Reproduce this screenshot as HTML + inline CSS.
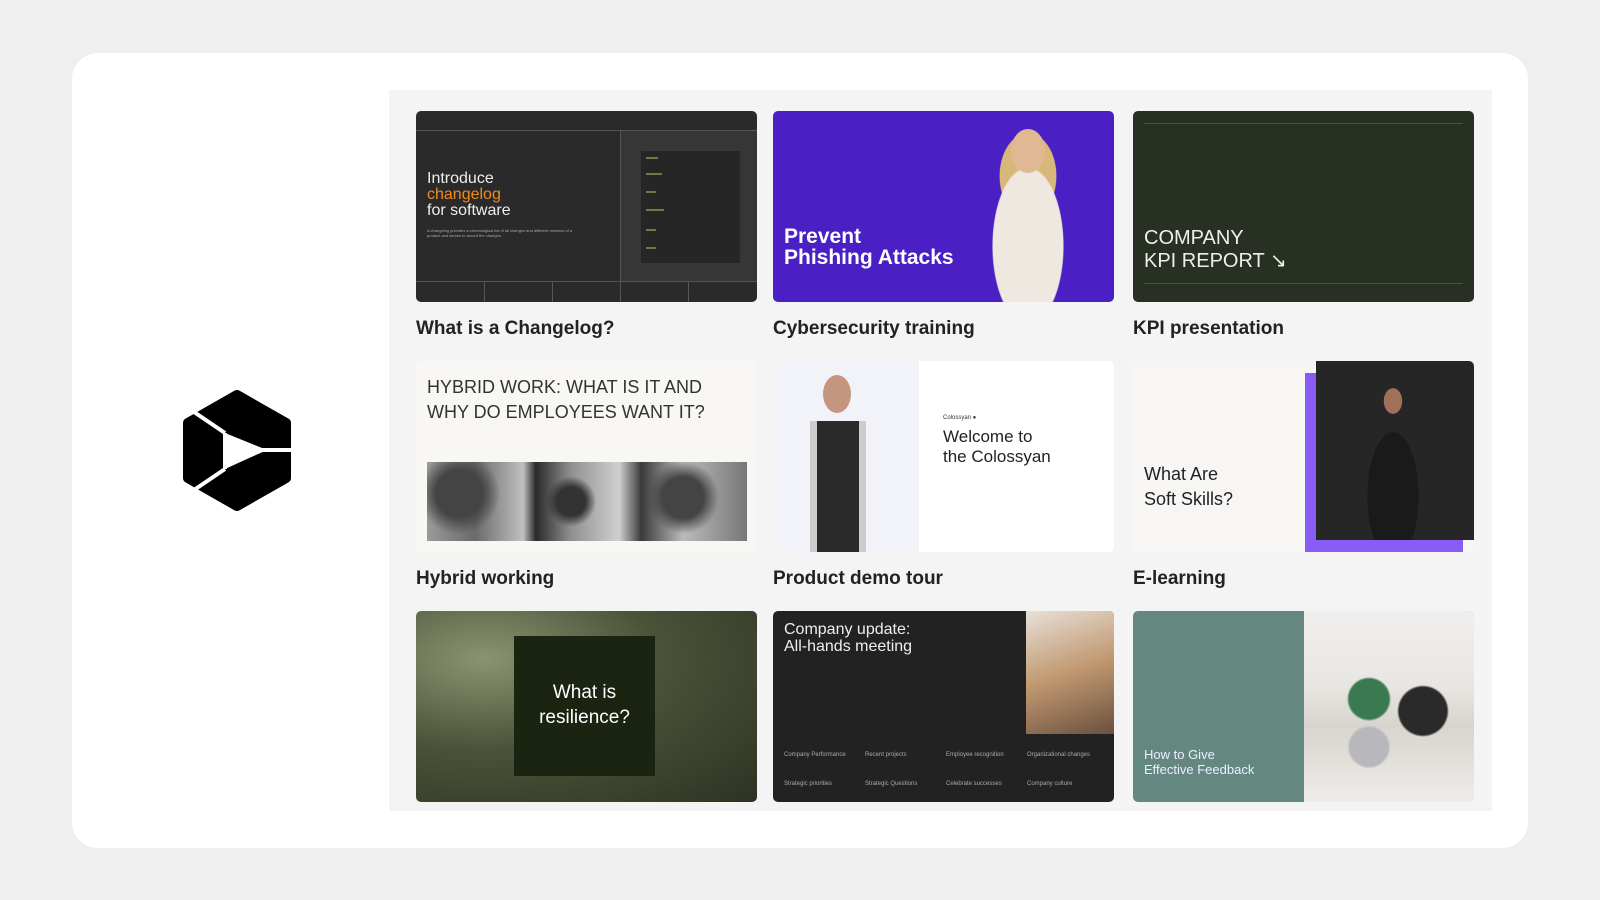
<!DOCTYPE html>
<html><head><meta charset="utf-8"><style>
*{margin:0;padding:0;box-sizing:border-box}
body{width:1600px;height:900px;background:#efefef;font-family:"Liberation Sans",sans-serif;position:relative;overflow:hidden}
.card{position:absolute;left:72px;top:53px;width:1456px;height:795px;background:#fff;border-radius:26px}
.panel{position:absolute;left:389px;top:90px;width:1103px;height:721px;background:#f4f4f4}
.t{position:absolute;width:341px;height:191px;border-radius:5px;overflow:hidden}
.lbl{position:absolute;font-size:19px;font-weight:bold;color:#222}
.abs{position:absolute}
.sm{font-size:4px;color:#aaa}
.cl{position:absolute;height:2px;background:#6a7a4a}
</style></head><body>
<div class="card"></div>
<svg class="abs" style="left:0;top:0" width="400" height="900">
<polygon points="237,395 286,423 286,478 237,506 188,478 188,423" fill="#000" stroke="#000" stroke-width="10" stroke-linejoin="round"/>
<path d="M225,433 L267,450 L225,469 Z" fill="#fff"/>
<path d="M225,433 L194,412 M225,469 L194,490 M225,433 L225,469 M262,450 L295,450" stroke="#fff" stroke-width="4" fill="none"/>
</svg>
<div class="panel"></div>

<!-- row1 -->
<div class="t" style="left:416px;top:111px;background:#2a2a2a">
 <div class="abs" style="left:0;top:19px;width:341px;height:1px;background:#555"></div>
 <div class="abs" style="left:204px;top:19px;width:1px;height:151px;background:#555"></div>
 <div class="abs" style="left:205px;top:20px;width:136px;height:150px;background:#363636"></div>
 <div class="abs" style="left:225px;top:40px;width:99px;height:112px;background:#262626"></div>
 <div class="cl" style="left:230px;top:46px;width:12px"></div>
 <div class="cl" style="left:230px;top:62px;width:16px"></div>
 <div class="cl" style="left:230px;top:80px;width:10px"></div>
 <div class="cl" style="left:230px;top:98px;width:18px"></div>
 <div class="cl" style="left:230px;top:118px;width:10px"></div>
 <div class="cl" style="left:230px;top:136px;width:10px"></div>
 <div class="abs" style="left:0;top:170px;width:341px;height:1px;background:#555"></div>
 <div class="abs" style="left:68px;top:170px;width:1px;height:21px;background:#555"></div>
 <div class="abs" style="left:136px;top:170px;width:1px;height:21px;background:#555"></div>
 <div class="abs" style="left:204px;top:170px;width:1px;height:21px;background:#555"></div>
 <div class="abs" style="left:272px;top:170px;width:1px;height:21px;background:#555"></div>
 <div class="abs" style="left:11px;top:60px;font-size:16px;line-height:16px;color:#eee">Introduce<br><span style="color:#f08c1a">changelog</span><br>for software</div>
 <div class="abs sm" style="left:11px;top:117px;width:150px">A changelog provides a chronological list of all changes and different versions of a product and serves to record the changes.</div>
</div>
<div class="lbl" style="left:416px;top:318px">What is a Changelog?</div>

<div class="t" style="left:773px;top:111px;background:#4a1fc4">
 <div class="abs" style="left:200px;top:5px;width:110px;height:186px;background:radial-gradient(ellipse 28px 36px at 55px 35px,#e0b894 60%,transparent 62%),radial-gradient(ellipse 50px 110px at 55px 130px,#efe8e0 70%,transparent 72%),radial-gradient(ellipse 40px 60px at 55px 60px,#d8b878 70%,transparent 72%)"></div>
 <div class="abs" style="left:11px;top:115px;font-size:21px;line-height:21px;font-weight:bold;color:#fff">Prevent<br>Phishing Attacks</div>
</div>
<div class="lbl" style="left:773px;top:318px">Cybersecurity training</div>

<div class="t" style="left:1133px;top:111px;background:#273022">
 <div class="abs" style="left:11px;top:12px;width:319px;height:1px;background:#4a5244"></div>
 <div class="abs" style="left:11px;top:172px;width:319px;height:1px;background:#4a5244"></div>
 <div class="abs" style="left:11px;top:116px;font-size:20px;line-height:23px;color:#eee">COMPANY<br>KPI REPORT ↘</div>
</div>
<div class="lbl" style="left:1133px;top:318px">KPI presentation</div>

<!-- row2 -->
<div class="t" style="left:416px;top:361px;background:#f8f7f3">
 <div class="abs" style="left:11px;top:14px;font-size:18px;line-height:25px;color:#333">HYBRID WORK: WHAT IS IT AND<br>WHY DO EMPLOYEES WANT IT?</div>
 <div class="abs" style="left:11px;top:101px;width:320px;height:79px;background:radial-gradient(circle at 10% 40%,#444 8%,transparent 14%),radial-gradient(circle at 45% 50%,#333 8%,transparent 14%),radial-gradient(circle at 80% 45%,#444 8%,transparent 14%),linear-gradient(90deg,#9a9a9a,#6a6a6a 15%,#c0c0c0 30%,#2a2a2a 34%,#909090 45%,#d0d0d0 60%,#3a3a3a 67%,#bbb 80%,#777 100%)"></div>
</div>
<div class="lbl" style="left:416px;top:568px">Hybrid working</div>

<div class="t" style="left:773px;top:361px;background:#fff">
 <div class="abs" style="left:0;top:0;width:146px;height:191px;background:#f1f3f8"></div>
 <div class="abs" style="left:30px;top:60px;width:70px;height:131px;background:linear-gradient(90deg,transparent 10%,#ccc 10%,#ccc 20%,#2a2a2a 20%,#2a2a2a 80%,#ccc 80%,#ccc 90%,transparent 90%)"></div>
 <div class="abs" style="left:50px;top:14px;width:28px;height:38px;border-radius:50%;background:#c49680"></div>
 <div class="abs" style="left:170px;top:54px;font-size:6px;color:#333">Colossyan ●</div>
 <div class="abs" style="left:170px;top:66px;font-size:17px;line-height:20px;color:#222">Welcome to<br>the Colossyan</div>
</div>
<div class="lbl" style="left:773px;top:568px">Product demo tour</div>

<div class="t" style="left:1133px;top:361px;background:#f7f6f4">
 <div class="abs" style="left:172px;top:12px;width:158px;height:179px;background:#8a5cf6"></div>
 <div class="abs" style="left:183px;top:0;width:158px;height:179px;background:#262626"></div>
 <div class="abs" style="left:225px;top:15px;width:70px;height:164px;background:radial-gradient(ellipse 13px 18px at 35px 25px,#a0705a 70%,transparent 72%),radial-gradient(ellipse 36px 90px at 35px 120px,#1a1a1a 70%,transparent 72%)"></div>
 <div class="abs" style="left:11px;top:101px;font-size:18px;line-height:25px;color:#222">What Are<br>Soft Skills?</div>
</div>
<div class="lbl" style="left:1133px;top:568px">E-learning</div>

<!-- row3 -->
<div class="t" style="left:416px;top:611px;background:radial-gradient(ellipse at 20% 25%,#8a9470,#4a5238 45%,#2c3322 100%)">
 <div class="abs" style="left:98px;top:25px;width:141px;height:140px;background:#1a2410;text-align:center;color:#fff;padding-top:44px;font-size:19px;line-height:25px">What is<br>resilience?</div>
</div>

<div class="t" style="left:773px;top:611px;background:#222">
 <div class="abs" style="left:253px;top:0;width:88px;height:123px;background:linear-gradient(160deg,#e8e0d8,#c09870 50%,#6a5040)"></div>
 <div class="abs" style="left:11px;top:10px;font-size:16px;line-height:17px;color:#eee">Company update:<br>All-hands meeting</div>
 <div class="abs" style="left:11px;top:141px;width:330px;font-size:6px;color:#aaa">
  <span class="abs" style="left:0">Company Performance</span><span class="abs" style="left:81px">Recent projects</span><span class="abs" style="left:162px">Employee recognition</span><span class="abs" style="left:243px">Organizational changes</span>
 </div>
 <div class="abs" style="left:11px;top:170px;width:330px;font-size:6px;color:#aaa">
  <span class="abs" style="left:0">Strategic priorities</span><span class="abs" style="left:81px">Strategic Questions</span><span class="abs" style="left:162px">Celebrate successes</span><span class="abs" style="left:243px">Company culture</span>
 </div>
</div>

<div class="t" style="left:1133px;top:611px;background:#648880">
 <div class="abs" style="left:171px;top:0;width:170px;height:191px;background:linear-gradient(180deg,#f0efed 0%,#e8e6e2 40%,#d8d4ce 60%,#eeecea 100%)"></div>
 <div class="abs" style="left:200px;top:40px;width:120px;height:120px;background:radial-gradient(circle at 30% 40%,#3a7a50 18%,transparent 20%),radial-gradient(circle at 75% 50%,#2a2a2a 22%,transparent 24%),radial-gradient(circle at 30% 80%,#b8b8bc 15%,transparent 17%)"></div>
 <div class="abs" style="left:11px;top:136px;font-size:13px;line-height:15px;color:#eef">How to Give<br>Effective Feedback</div>
</div>
</body></html>
